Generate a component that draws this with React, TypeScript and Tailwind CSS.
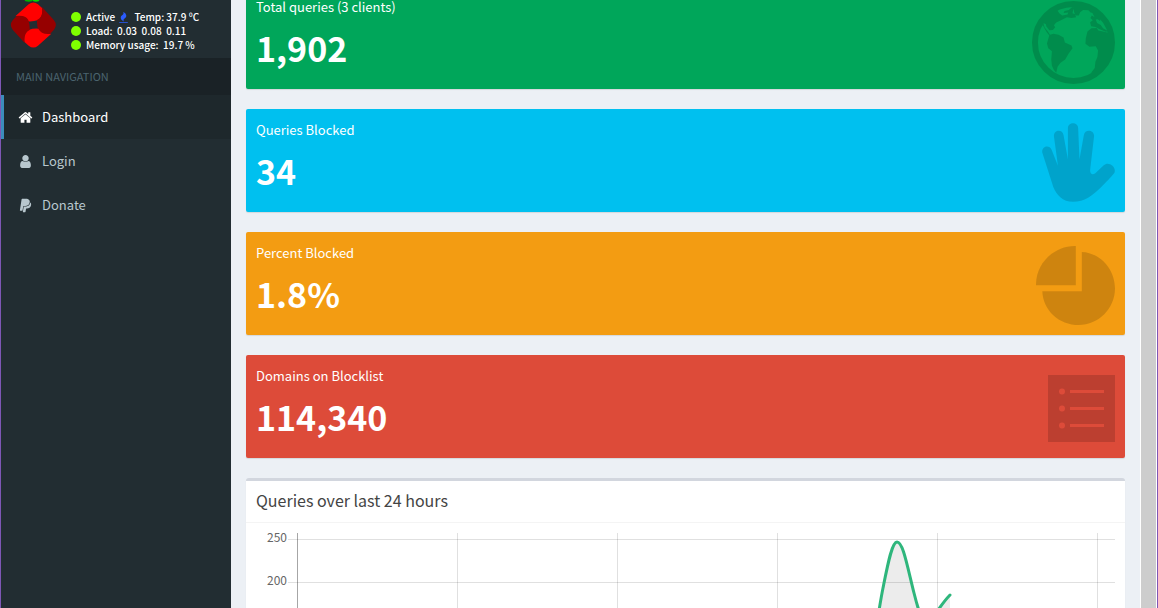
import type { ReactNode } from "react";
import { FaPaypal } from "react-icons/fa";

const FA_HOME =
  "M1472 992v480q0 26-19 45t-45 19h-384v-384h-256v384h-384q-26 0-45-19t-19-45v-480q0-1 .5-3t.5-3l575-474 575 474q1 2 1 6zm223-69l-62 74q-8 9-21 11h-3q-13 0-21-7l-692-577-692 577q-12 8-24 7-13-2-21-11l-62-74q-8-10-7-23.5t11-21.5l719-599q32-26 76-26t76 26l244 204v-195q0-14 9-23t23-9h192q14 0 23 9t9 23v408l219 182q10 8 11 21.5t-7 23.5z";
const FA_USER =
  "M1536 1399q0 109-62.5 187t-150.5 78h-854q-88 0-150.5-78t-62.5-187q0-85 8.5-160.5t31.5-152 58.5-131 94-89 134.5-34.5q131 128 313 128t313-128q76 0 134.5 34.5t94 89 58.5 131 31.5 152 8.5 160.5zm-256-887q0 159-112.5 271.5t-271.5 112.5-271.5-112.5-112.5-271.5 112.5-271.5 271.5-112.5 271.5 112.5 112.5 271.5z";
const FA_FIRE =
  "M1600 1696v64q0 13-9.5 22.5t-22.5 9.5h-1344q-13 0-22.5-9.5t-9.5-22.5v-64q0-13 9.5-22.5t22.5-9.5h1344q13 0 22.5 9.5t9.5 22.5zm-256-1056q0 78-24.5 144t-64 112.5-87.5 88-96 77.5-87.5 72-64 81.5-24.5 96.5q0 96 67 224l-4-1 1 1q-90-41-160-83t-138.5-100-113.5-122.5-72.5-150.5-27.5-184q0-78 24.5-144t64-112.5 87.5-88 96-77.5 87.5-72 64-81.5 24.5-96.5q0-94-66-224l3 1-1-1q90 41 160 83t138.5 100 113.5 122.5 72.5 150.5 27.5 184z";

const FaIcon = ({ path, className }: { path: string; className: string }) => (
  <svg viewBox="0 0 1792 1792" fill="currentColor" className={className} aria-hidden="true">
    <path d={path} />
  </svg>
);

const NAV_LINKS = [
  { href: "#dashboard", label: "Dashboard", active: true, icon: <FaIcon path={FA_HOME} className="size-[15px]" /> },
  { href: "#login", label: "Login", active: false, icon: <FaIcon path={FA_USER} className="size-[15px]" /> },
  { href: "#donate", label: "Donate", active: false, icon: <FaPaypal className="size-[15px]" /> },
];

const PETAL = "M46 49 L86 13 Q100 2 114 13 L127 25 C129 41 126 54 115 60 Q100 65 85 64 C79 51 65 46 46 49 Z";

const Logo = () => (
  <svg viewBox="30 0 141 147" className="w-[47px] h-[49px]" aria-hidden="true">
    <ellipse cx="86" cy="0" rx="12" ry="5" fill="#00b300" />
    <ellipse cx="108" cy="0" rx="10" ry="5" fill="#00d900" />
    <path d={PETAL} fill="#ff0000" />
    <path d={PETAL} fill="#960000" transform="rotate(90 100 75)" />
    <path d={PETAL} fill="#ff0000" transform="rotate(180 100 75)" />
    <path d={PETAL} fill="#960000" transform="rotate(270 100 75)" />
  </svg>
);

// opacity sits on the group so the rim and the land don't darken where they overlap
const EarthIcon = () => (
  <svg viewBox="95 2 250 250" className="size-[83px] mt-[5px]" aria-hidden="true">
    <g opacity="0.15" fill="#000000">
      <circle cx="220" cy="127" r="116" fill="none" stroke="#000000" strokeWidth="18" />
      <path d="M119 82 L129 68 L133 82 L143 94 L149 104 L160 101 L175 104 L190 112 L194 127 L214 136 L217 144 L205 161 L195 178 L181 188 L172 200 L168 218 L161 210 L155 197 L153 178 L155 153 L144 144 L140 130 L147 106 L139 95 L131 82 L128 74 Z" />
      <path d="M129 68 L137 72 L138 78 L147 90 L158 89 L165 81 L161 75 L168 67 L184 59 L200 51 L214 53 L228 51 L224 41 L217 39 L219 29 L224 22 L216 20 L206 29 L193 32 L190 38 L204 37 L202 43 L186 46 L178 40 L170 28 Q145 42 129 68 Z" />
      <path d="M219 20 L222 36 L226 46 L236 46 L240 36 L249 29 L266 30 L270 36 L277 38 L283 50 L275 46 L271 53 L278 60 L270 66 L273 78 L286 80 L297 86 L319 95 L321 91 L309 84 L302 74 L291 68 L287 58 L293 57 L300 62 L302 55 L280 30 L246 17 Z" />
      <path d="M257 115 L262 94 L274 84 L290 83 L295 91 L309 94 L325 98 L332 130 Q326 185 283 219 L273 218 L284 204 L286 185 L292 171 L294 151 L287 138 L268 140 L256 131 Z" />
    </g>
  </svg>
);

const HandIcon = () => (
  <svg viewBox="126 54 220 237" className="w-[73px] h-[79px] text-black/15" fill="currentColor" aria-hidden="true">
    <path d="M127 143 C123 124 148 116 155 134 L174 182 L162 94 C160 73 188 70 191 90 L204 163 L204 69 C204 49 235 49 235 69 L239 163 L252 90 C255 70 284 74 283 93 L271 196 C271 209 281 211 289 203 L312 181 C326 167 352 186 344 204 C335 216 317 233 304 247 C278 272 254 291 220 291 C188 291 169 269 160 246 Z" />
  </svg>
);

const PieIcon = () => (
  <svg viewBox="108 62 238 238" className="size-[79px] text-black/15" fill="currentColor" aria-hidden="true">
    <path d="M228 62 L228 180 L108 180 C107 114 162 61 228 62 Z" />
    <path d="M246 80 C301 82 346 132 346 190 C346 250 297 300 237 300 C177 300 129 255 127 198 L246 198 Z" />
  </svg>
);

const ListIcon = () => (
  <svg viewBox="0 0 67 67" className="size-[67px] text-black/15" aria-hidden="true">
    <path
      fill="currentColor"
      fillRule="evenodd"
      d="M0 0H67V67H0Z M22 15H56V18H22Z M22 32H56V35H22Z M22 49H56V52H22Z M11 16.500a3 3 0 1 0 6 0a3 3 0 1 0 -6 0Z M11 33.500a3 3 0 1 0 6 0a3 3 0 1 0 -6 0Z M11 50.500a3 3 0 1 0 6 0a3 3 0 1 0 -6 0Z"
    />
  </svg>
);

const STATS = [
  { label: "Total queries (3 clients)", value: "1,902", color: "bg-[#00a65a]", icon: <EarthIcon /> },
  { label: "Queries Blocked", value: "34", color: "bg-[#00c0ef]", icon: <HandIcon /> },
  { label: "Percent Blocked", value: "1.8%", color: "bg-[#f39c12]", icon: <PieIcon /> },
  { label: "Domains on Blocklist", value: "114,340", color: "bg-[#dd4b39]", icon: <ListIcon /> },
];

const StatusRow = ({ children }: { children: ReactNode }) => (
  <p className="flex items-center h-[14px] whitespace-pre">
    <span className="size-[10px] rounded-full bg-[#7fff00] mr-[5px]" />
    {children}
  </p>
);

const Sidebar = () => (
  <aside className="w-[230px] shrink-0 bg-[#222d32]">
    <div className="flex h-[58px] pl-[9px]">
      <Logo />
      <div className="pt-[10px] pl-[14px] text-[10px] leading-3 font-medium text-white">
        <StatusRow>
          Active
          <FaIcon path={FA_FIRE} className="size-[11px] mx-[3px] text-[#2b5cff]" />
          {" Temp: 37.9 ⁰C"}
        </StatusRow>
        <StatusRow>{"Load:  0.03  0.08  0.11"}</StatusRow>
        <StatusRow>{"Memory usage:  19.7 %"}</StatusRow>
      </div>
    </div>
    <h2 className="h-[37px] pl-[15px] text-[11px] leading-[37px] text-[#4b646f] bg-[#1a2226]">MAIN NAVIGATION</h2>
    <nav>
      {NAV_LINKS.map((link) => (
        <a
          key={link.href}
          href={link.href}
          className={`flex items-center h-11 pl-[14px] text-[13px] border-l-[3px] ${
            link.active ? "bg-[#1e282c] border-[#3c8dbc] text-white" : "border-transparent text-[#b8c7ce]"
          }`}
        >
          <span className="w-6">{link.icon}</span>
          {link.label}
        </a>
      ))}
    </nav>
  </aside>
);

const GRID_X = [201, 361, 521, 681, 841];
const GRID_Y = [
  { y: 6, label: "250" },
  { y: 49, label: "200" },
  { y: 92, label: "150" },
  { y: 135, label: "100" },
  { y: 178, label: "50" },
  { y: 221, label: "0" },
];
const LINE = "M601 190 C614 150 619 95 627 55 C632 30 636 9 641 9 C647 9 651 32 658 60 C663 80 667 92 672 91 C678 84 685 71 694 62";

const QueriesChart = () => (
  <svg viewBox="0 0 859 240" className="block w-full" role="img" aria-label="Queries over last 24 hours">
    <path d={`${LINE} V221 H601 Z`} fill="#ececec" />
    {GRID_Y.map((row) => (
      <g key={row.label}>
        <path d={`M32 ${row.y}.5H859`} stroke="#000000" strokeOpacity="0.12" />
        <text x="31" y={row.y + 3} textAnchor="end" fontSize="12" fill="#666666">
          {row.label}
        </text>
      </g>
    ))}
    {GRID_X.map((x) => (
      <path key={x} d={`M${x}.5 0V221`} stroke="#000000" strokeOpacity="0.12" />
    ))}
    <path d="M41.500 0V221" stroke="#000000" strokeOpacity="0.35" />
    <path d={LINE} fill="none" stroke="#2eb67c" strokeWidth="3" strokeLinecap="round" />
  </svg>
);

export default function App() {
  return (
    <div className="flex h-screen overflow-hidden bg-[#ecf0f5] border-x border-[#7e57b5] font-['Noto_Sans_CJK_SC',sans-serif]">
      <Sidebar />
      <main className="flex-1 min-w-0 px-[15px]">
        {/* page is scrolled a little past the first card's top edge */}
        <div className="flex flex-col gap-5 -mt-[14px]">
          {STATS.map((stat) => (
            <section
              key={stat.label}
              className={`flex justify-between h-[103px] shrink-0 p-[10px] rounded-xs text-white shadow-[0_1px_1px_rgba(0,0,0,0.1)] ${stat.color}`}
            >
              <div>
                <p className="text-[13px] leading-[22px]">{stat.label}</p>
                <h3 className="mt-[10px] text-[34px] leading-10 font-bold">{stat.value}</h3>
              </div>
              <div className="flex items-center pt-1">{stat.icon}</div>
            </section>
          ))}
          <section className="bg-white border-t-[3px] border-[#d2d6de] rounded-[3px] shadow-[0_1px_1px_rgba(0,0,0,0.1)]">
            <h3 className="h-[42px] px-[10px] text-base leading-[38px] text-[#444444] border-b border-[#f4f4f4]">
              Queries over last 24 hours
            </h3>
            <div className="p-[10px]">
              <QueriesChart />
            </div>
          </section>
        </div>
      </main>
      <div className="w-[17px] shrink-0 bg-[#cdcdcd] border-x border-white" />
    </div>
  );
}
